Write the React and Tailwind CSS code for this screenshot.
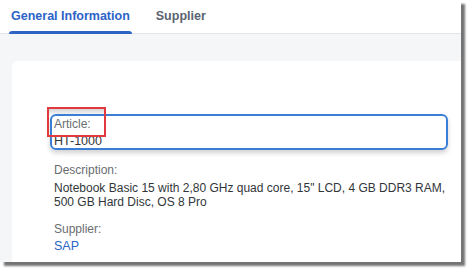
export default function App() {
  return (
    <div className="w-[474px] h-[276px] bg-white overflow-hidden" style={{ fontFamily: '"Liberation Sans", Arial, sans-serif' }}>
      <div className="w-[461px] h-[262px] flex flex-col overflow-hidden shadow-[4px_4px_2px_rgba(0,0,0,0.55)]">
        {/* tab header */}
        <div className="h-[34px] shrink-0 bg-white border-b border-[#e5e5e5] flex items-stretch pl-[9px] gap-[24px] text-[12.5px] font-bold">
          <div className="relative flex items-center px-[2px] text-[#2c64c6]">
            General Information
            <div className="absolute left-0 right-0 bottom-[-1px] h-[3px] bg-[#2c64c6] rounded-t-sm" />
          </div>
          <div className="flex items-center text-[#5b6470]">Supplier</div>
        </div>

        {/* page body */}
        <div className="flex-1 bg-[#f5f6f7] pl-3 pt-[27px]">
          <div className="h-full bg-white rounded-tl-[6px] pl-[38px] pr-[13px] pt-[53px]">
            <div className="relative">
              <div className="absolute left-[-3px] top-[-7px] w-[59px] h-[29px] bg-gradient-to-b from-[#c8c8c8] to-transparent to-[30%]" />
              <div className="relative h-[36px] border-2 border-[#3b7ed6] rounded-[6px] shadow-[0_3px_5px_rgba(0,0,0,0.18)] pl-[2px] pt-[2px] flex flex-col justify-center leading-[17px]">
                <span className="text-[12px] text-[#6a6d70]">Article:</span>
                <span className="text-[12.5px] text-[#32363a]">HT-1000</span>
              </div>
              <div className="absolute left-[-3px] top-[-7px] w-[59px] h-[30px] border-2 border-[#e0393e]" />
            </div>

            <div className="pl-[4px] mt-[12px] flex flex-col">
              <span className="text-[12px] text-[#6a6d70] leading-[16px]">Description:</span>
              <span className="mt-[3px] text-[12px] text-[#32363a] leading-[14px] whitespace-nowrap">
                Notebook Basic 15 with 2,80 GHz quad core, 15" LCD, 4 GB DDR3 RAM,<br />
                500 GB Hard Disc, OS 8 Pro
              </span>
              <span className="mt-[12px] text-[12px] text-[#6a6d70] leading-[16px]">Supplier:</span>
              <span className="mt-[1px] text-[12.5px] text-[#2c64c6] leading-[16px]">SAP</span>
            </div>
          </div>
        </div>
      </div>
    </div>
  )
}
